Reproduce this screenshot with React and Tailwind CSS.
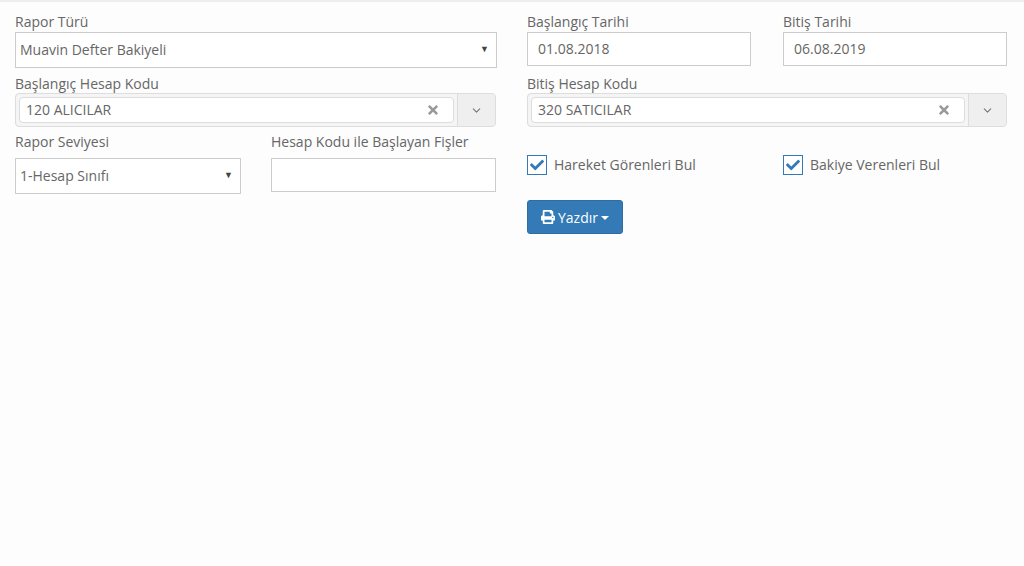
import React from "react";
import { FaPrint, FaTimes, FaCheck } from "react-icons/fa";
import { FiChevronDown } from "react-icons/fi";

const Label = ({ children, low }) => (
  <div className={"h-[20px] whitespace-nowrap text-[14px] text-[#666666] " + (low ? "leading-[22px]" : "leading-[20px]")}>{children}</div>
);

const Select = ({ value }) => (
  <div className="flex h-[36px] items-center justify-between border border-[#cccccc] bg-white pl-[4px] pr-[7px] text-[14px] text-[#666666]">
    <span className="pb-[2px]">{value}</span>
    <span className="mb-[3px] text-[9px] leading-none text-[#444444]">▼</span>
  </div>
);

const DateInput = ({ value }) => (
  <div className="flex h-[34px] items-center border border-[#cccccc] bg-white pb-[2px] pl-[10px] text-[14px] text-[#666666]">{value}</div>
);

const Combo = ({ value }) => (
  <div className="flex h-[34px] rounded-[4px] border border-[#dddddd] bg-[#f5f5f5]">
    <div className="my-[3px] ml-[3px] flex flex-1 items-center justify-between rounded-[4px] border border-[#dddddd] bg-white pl-[6px] pr-[13px] text-[14px] text-[#666666]">
      <span className="pb-[2px]">{value}</span>
      <FaTimes className="text-[14px] text-[#999999]" />
    </div>
    <div className="ml-[3px] flex w-[38px] items-center justify-center rounded-r-[4px] border-l border-[#dddddd] bg-[#efefef]">
      <FiChevronDown className="text-[13px] text-[#777777]" />
    </div>
  </div>
);

const Check = ({ label }) => (
  <div className="flex items-center gap-[7px]">
    <div className="flex h-[20px] w-[20px] shrink-0 items-center justify-center border border-[#337ab7] bg-white">
      <FaCheck className="text-[14px] text-[#337ab7]" />
    </div>
    <span className="whitespace-nowrap text-[14px] text-[#666666]">{label}</span>
  </div>
);

export default function App() {
  return (
    <div className="h-[566px] w-[1024px] overflow-hidden border-t-2 border-[#eeeeee] bg-[#fdfdfd] font-['Open_Sans',sans-serif]">
      <div className="grid grid-cols-[482px_480px] gap-x-[30px] pl-[15px] pt-[10px]">
        <div>
          <Label>Rapor Türü</Label>
          <Select value="Muavin Defter Bakiyeli" />
          <div className="mt-[5px]">
            <Label low>Başlangıç Hesap Kodu</Label>
            <div className="w-[481px]"><Combo value="120 ALICILAR" /></div>
          </div>
          <div className="mt-[5px] flex gap-[30px]">
            <div className="w-[226px]">
              <Label>Rapor Seviyesi</Label>
              <div className="mt-[6px]"><Select value="1-Hesap Sınıfı" /></div>
            </div>
            <div className="w-[225px]">
              <Label>Hesap Kodu ile Başlayan Fişler</Label>
              <div className="mt-[6px] h-[34px] border border-[#cccccc] bg-white" />
            </div>
          </div>
        </div>
        <div>
          <div className="flex gap-[32px]">
            <div className="w-[224px]">
              <Label>Başlangıç Tarihi</Label>
              <DateInput value="01.08.2018" />
            </div>
            <div className="w-[224px]">
              <Label>Bitiş Tarihi</Label>
              <DateInput value="06.08.2019" />
            </div>
          </div>
          <div className="mt-[7px]">
            <Label low>Bitiş Hesap Kodu</Label>
            <Combo value="320 SATICILAR" />
          </div>
          <div className="mt-[27px] flex gap-[32px]">
            <div className="w-[224px]"><Check label="Hareket Görenleri Bul" /></div>
            <div className="w-[224px]"><Check label="Bakiye Verenleri Bul" /></div>
          </div>
          <div className="mt-[25px] flex h-[34px] w-[96px] items-center justify-center gap-[3px] rounded-[3px] border border-[#2e6da4] bg-[#337ab7] text-[14px] font-medium text-white">
            <FaPrint className="text-[14px]" />
            <span>Yazdır</span>
            <span className="mt-[2px] h-0 w-0 border-x-[4px] border-t-[4px] border-x-transparent border-t-white" />
          </div>
        </div>
      </div>
    </div>
  );
}
